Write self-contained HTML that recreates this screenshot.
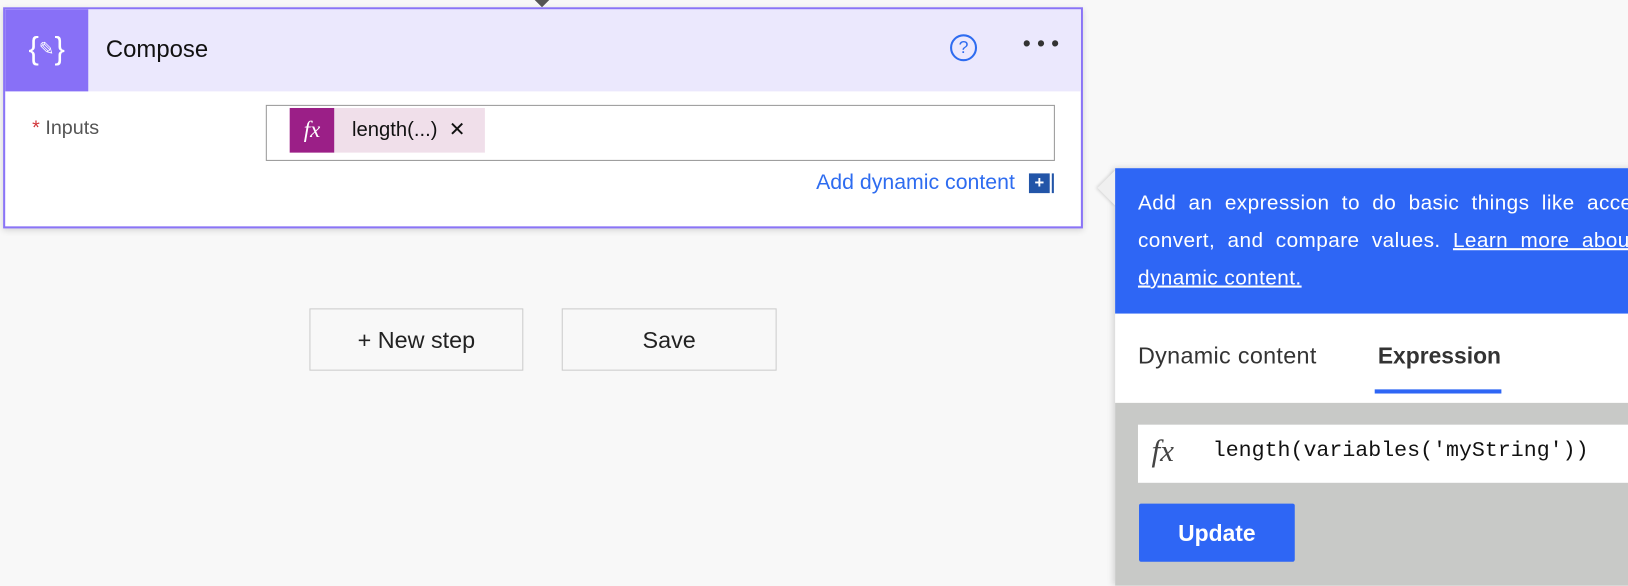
<!DOCTYPE html>
<html><head><meta charset="utf-8"><style>
body{margin:0;width:1628px;height:564px;background:#f8f8f8;font-family:"Liberation Sans",sans-serif;position:relative;overflow:hidden}
#w{position:absolute;left:0;top:0;width:1568px;height:544px;transform:scale(1.0383);transform-origin:0 0}
.abs{position:absolute}
</style></head><body><div id="w">
<div class="abs" style="left:515px;top:0;width:0;height:0;border-left:7px solid transparent;border-right:7px solid transparent;border-top:7px solid #555"></div>
<div class="abs" style="left:3px;top:7px;width:1036px;height:209px;border:2px solid #8a74f6;background:#fff;box-shadow:0 2px 6px rgba(0,0,0,.15)">
 <div class="abs" style="left:0;top:0;width:1036px;height:79px;background:#ebe8fd"></div>
 <div class="abs" style="left:0;top:0;width:80px;height:79px;background:#8870f7;color:#fff;font-size:30px;text-align:center;line-height:76px">{<span style="font-size:18px;vertical-align:4px">✎</span>}</div>
 <div class="abs" style="left:97px;top:25px;font-size:23px;color:#111">Compose</div>
 <div class="abs" style="left:910px;top:24px;width:22px;height:22px;border:2px solid #2e6cf0;border-radius:50%;color:#2e6cf0;font-size:17px;text-align:center;line-height:22px">?</div>
 <div class="abs" style="left:980px;top:20px;font-size:22px;color:#333;letter-spacing:6px">•••</div>
 <div class="abs" style="left:26px;top:104px;font-size:19px;color:#555"><span style="color:#d13438">*</span> Inputs</div>
 <div class="abs" style="left:251px;top:92px;width:758px;height:52px;border:1px solid #999;background:#fff">
  <div class="abs" style="left:22px;top:2px;width:43px;height:43px;background:#9b1f87;color:#fff;font-family:'Liberation Serif',serif;font-style:italic;font-size:22px;text-align:center;line-height:42px">fx</div>
  <div class="abs" style="left:65px;top:2px;width:145px;height:43px;background:#f0dfea;font-size:19.5px;color:#111;line-height:43px;padding-left:17px;box-sizing:border-box">length(...)&nbsp;&nbsp;✕</div>
 </div>
 <div class="abs" style="left:781px;top:155px;font-size:20.5px;color:#2e6cf0">Add dynamic content</div>
 <div class="abs" style="left:986px;top:158px;width:20px;height:19px;background:#2255a8;color:#fff;font-size:16px;font-weight:bold;text-align:center;line-height:19px">+</div>
 <div class="abs" style="left:1008px;top:158px;width:2px;height:19px;background:#2255a8"></div>
</div>
<div class="abs" style="left:298px;top:297px;width:206px;height:60px;border:1px solid #ccc;background:#f8f8f8;font-size:22.5px;color:#222;text-align:center;line-height:60px;box-sizing:border-box">+ New step</div>
<div class="abs" style="left:541px;top:297px;width:207px;height:60px;border:1px solid #ccc;background:#f8f8f8;font-size:22.5px;color:#222;text-align:center;line-height:60px;box-sizing:border-box">Save</div>
<div class="abs" style="left:1074px;top:162px;width:554px;height:402px;background:#fff;box-shadow:-2px 0 6px rgba(0,0,0,.15)"></div>
<div class="abs" style="top:169px;width:24px;height:24px;background:#f0f0f0;transform:rotate(45deg);left:1062px;box-shadow:-1px 1px 3px rgba(0,0,0,.15)"></div>
<div class="abs" style="left:1074px;top:162px;width:554px;height:140px;background:#2e66f5"></div>
<div class="abs" style="left:1096px;top:178px;width:600px;font-size:20px;color:#fff;line-height:36px;white-space:nowrap;letter-spacing:0.4px">Add &nbsp;an &nbsp;expression &nbsp;to &nbsp;do &nbsp;basic &nbsp;things &nbsp;like &nbsp;access<br>convert, &nbsp;and &nbsp;compare &nbsp;values. &nbsp;<u>Learn &nbsp;more &nbsp;about</u><br><u>dynamic content.</u></div>
<div class="abs" style="left:1096px;top:330px;font-size:22.5px;color:#333;letter-spacing:0.3px">Dynamic content</div>
<div class="abs" style="left:1327px;top:330px;font-size:22px;color:#333;font-weight:bold">Expression</div>
<div class="abs" style="left:1324px;top:375px;width:122px;height:4px;background:#2e66f5"></div>
<div class="abs" style="left:1074px;top:388px;width:554px;height:176px;background:#c8c9c7"></div>
<div class="abs" style="left:1096px;top:409px;width:532px;height:56px;background:#fff"></div>
<div class="abs" style="left:1109px;top:418px;font-family:'Liberation Serif',serif;font-style:italic;font-size:30px;color:#444">fx</div>
<div class="abs" style="left:1168px;top:423px;font-family:'Liberation Mono',monospace;font-size:20.8px;color:#111">length(variables('myString'))</div>
<div class="abs" style="left:1097px;top:485px;width:150px;height:56px;background:#2e66f5;border-radius:2px;color:#fff;font-size:22px;font-weight:bold;text-align:center;line-height:58px">Update</div>
</div></body></html>
